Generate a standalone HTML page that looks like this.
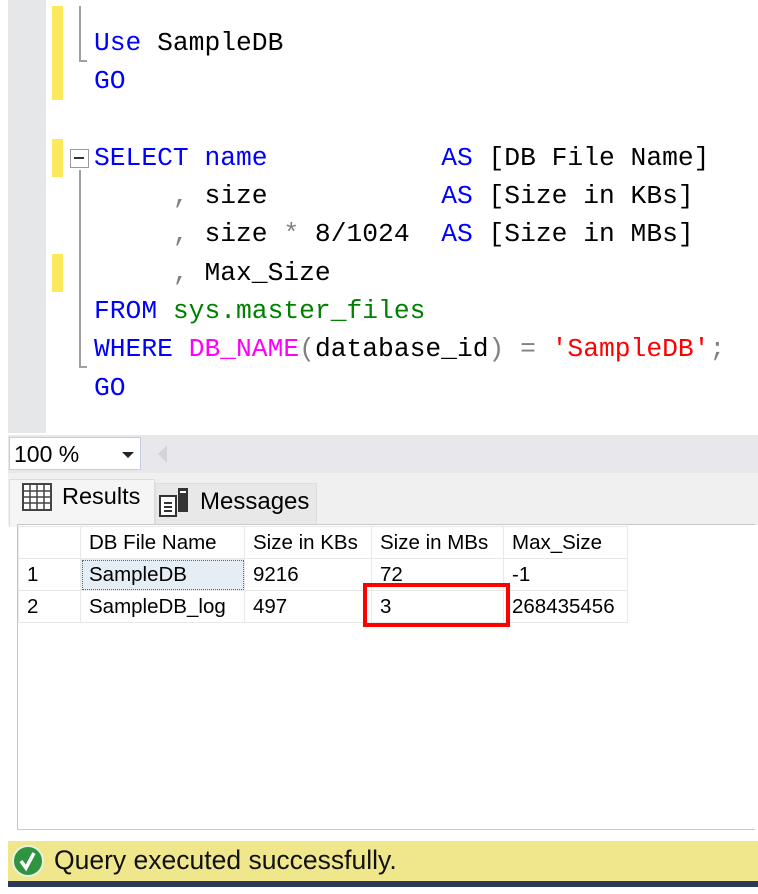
<!DOCTYPE html>
<html><head><meta charset="utf-8"><style>
body{margin:0;width:758px;height:894px;background:#fff;position:relative;overflow:hidden;font-family:"Liberation Sans",sans-serif}
.abs{position:absolute}
pre{margin:0;font-family:"Liberation Mono",monospace;font-size:26.3px;line-height:38.3px;position:absolute;left:94px;top:24px;color:#000}
.k{color:#0000ff}.g{color:#008000}.m{color:#ff00ff}.r{color:#ff0000}.gr{color:#808080}
.yb{position:absolute;left:52px;width:11px;background:#fce95b}
table{border-collapse:collapse;position:absolute;left:18px;top:526px;font-size:20.5px}
td{height:31px;border:1px solid #e8e8e8;padding:0 0 0 8px;white-space:nowrap}
</style></head><body>
<div class="abs" style="left:8px;top:0;width:38px;height:433px;background:#e6e7e9"></div>
<div class="yb" style="top:6px;height:94px"></div>
<div class="yb" style="top:139px;height:38px"></div>
<div class="yb" style="top:254px;height:38px"></div>
<div class="abs" style="left:79px;top:6px;width:1px;height:55px;border-left:2px solid #a0a0a0;"></div>
<div class="abs" style="left:79px;top:60px;width:8px;height:1px;border-top:2px solid #a0a0a0"></div>
<div class="abs" style="left:70px;top:149px;width:17px;height:17px;border:1px solid #999;background:#fff"></div>
<div class="abs" style="left:74px;top:157px;width:10px;height:2px;background:#333"></div>
<div class="abs" style="left:79px;top:170px;width:1px;height:197px;border-left:2px solid #a0a0a0"></div>
<div class="abs" style="left:79px;top:366px;width:8px;border-top:2px solid #a0a0a0"></div>
<pre><span class="k">Use</span> SampleDB
<span class="k">GO</span>

<span class="k">SELECT</span> <span class="k">name</span>           <span class="k">AS</span> [DB File Name]
     <span class="gr">,</span> size           <span class="k">AS</span> [Size in KBs]
     <span class="gr">,</span> size <span class="gr">*</span> 8/1024  <span class="k">AS</span> [Size in MBs]
     <span class="gr">,</span> Max_Size
<span class="k">FROM</span> <span class="g">sys.master_files</span>
<span class="k">WHERE</span> <span class="m">DB_NAME</span><span class="gr">(</span>database_id<span class="gr">)</span> <span class="gr">=</span> <span class="r">'SampleDB'</span><span class="gr">;</span>
<span class="k">GO</span></pre>
<div class="abs" style="left:8px;top:435px;width:750px;height:38px;background:#e8e8ec"></div>
<div class="abs" style="left:9px;top:437px;width:132px;height:33px;background:#fff;border:1px solid #c5cbe0;font-size:23px;line-height:33px;padding-left:4px;box-sizing:border-box">100 %</div>
<div class="abs" style="left:122px;top:452px;width:0;height:0;border-left:6px solid transparent;border-right:6px solid transparent;border-top:6px solid #222"></div>
<div class="abs" style="left:158px;top:445px;width:0;height:0;border-top:9px solid transparent;border-bottom:9px solid transparent;border-right:9px solid #d4d4d8"></div>
<div class="abs" style="left:8px;top:473px;width:750px;height:52px;background:#f0f0f0"></div>
<div class="abs" style="left:9px;top:479px;width:144px;height:47px;background:#f5f5f5;border:1px solid #ddd;border-bottom:none"></div>
<svg class="abs" style="left:22px;top:483px" width="30" height="28"><rect x="1" y="1" width="28" height="26" fill="#fff" stroke="#444" stroke-width="2"/><path d="M1 8H29M1 14H29M1 20H29M8 1V27M15 1V27M22 1V27" stroke="#444" stroke-width="1.5"/></svg>
<div class="abs" style="left:62px;top:483px;font-size:23.5px">Results</div>
<div class="abs" style="left:155px;top:483px;width:160px;height:42px;background:#e8e8e8;border:1px solid #ddd;border-bottom:none"></div>
<svg class="abs" style="left:158px;top:486px" width="34" height="32"><rect x="2" y="10" width="16" height="20" fill="#fff" stroke="#333" stroke-width="2"/><path d="M6 17H14M6 21H14M6 25H14" stroke="#333" stroke-width="2"/><rect x="20" y="2" width="10" height="24" fill="#333"/><rect x="22" y="5" width="6" height="2" fill="#fff"/></svg>
<div class="abs" style="left:200px;top:488px;font-size:24px">Messages</div>
<div class="abs" style="left:17px;top:524px;width:738px;height:306px;border:1px solid #c8c8c8;border-right:none;background:#fff;box-sizing:border-box"></div>
<table>
<tr><td style="width:53px"></td><td style="width:155px">DB File Name</td><td style="width:118px">Size in KBs</td><td style="width:123px">Size in MBs</td><td style="width:115px">Max_Size</td></tr>
<tr><td>1</td><td style="background:#e6eef5;outline:1px dotted #666;outline-offset:-2px">SampleDB</td><td>9216</td><td>72</td><td>-1</td></tr>
<tr><td>2</td><td>SampleDB_log</td><td>497</td><td>3</td><td>268435456</td></tr>
</table>
<div class="abs" style="left:363px;top:583px;width:147px;height:44px;border:4px solid #f00;box-sizing:border-box"></div>
<div class="abs" style="left:8px;top:841px;width:750px;height:40px;background:#f0e68c"></div>
<div class="abs" style="left:8px;top:881px;width:750px;height:6px;background:#2e3a5c"></div>
<svg class="abs" style="left:12px;top:845px" width="32" height="32"><circle cx="16" cy="16" r="15" fill="#2e9440" stroke="#e8f0e0" stroke-width="2"/><path d="M9 16L14 23L22 8" stroke="#fff" stroke-width="3.5" fill="none"/></svg>
<div class="abs" style="left:54px;top:845px;font-size:26.5px;color:#111">Query executed successfully.</div>
</body></html>
